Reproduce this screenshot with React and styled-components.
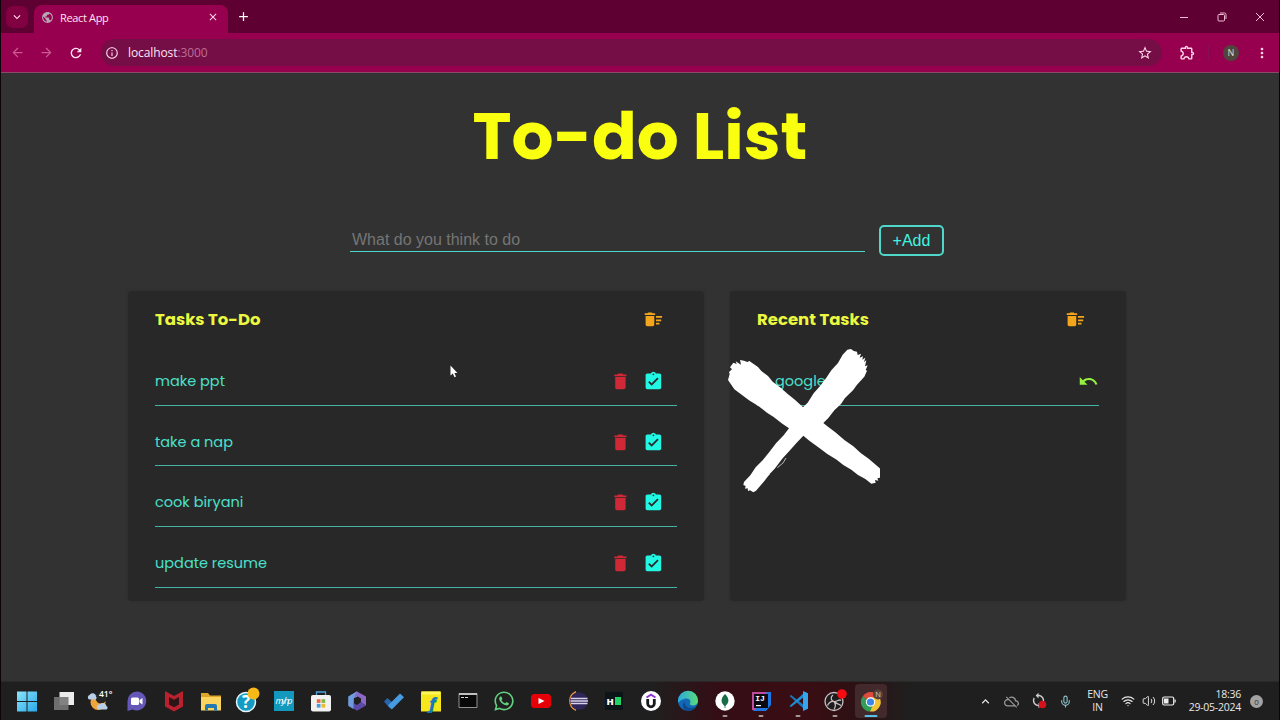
import React from 'react'
import styled, { createGlobalStyle } from 'styled-components'
import {
  MdArrowBack,
  MdArrowForward,
  MdRefresh,
  MdInfoOutline,
  MdStarBorder,
  MdOutlineExtension,
  MdMoreVert,
  MdKeyboardArrowDown,
  MdKeyboardArrowUp,
  MdClose,
  MdAdd,
  MdDelete,
  MdDeleteSweep,
  MdAssignmentTurnedIn,
  MdUndo,
  MdPublic,
  MdCloudOff,
  MdSync,
} from 'react-icons/md'
import { FaWhatsapp } from 'react-icons/fa'
import { Mic, Volume2, Wifi } from 'lucide-react'

const GlobalStyle = createGlobalStyle`
  * {
    box-sizing: border-box;
  }

  body {
    margin: 0;
    background: #323232;
    overflow: hidden;
  }

  svg {
    display: block;
    flex-shrink: 0;
  }
`

const Screen = styled.div`
  width: 1280px;
  height: 720px;
  display: flex;
  flex-direction: column;
  border: solid #0c0508;
  border-width: 0 1px;
  font-family: 'Open Sans', 'Noto Sans', sans-serif;
`

/* ---------- browser ---------- */

const TabStrip = styled.div`
  height: 33px;
  display: flex;
  align-items: center;
  padding-left: 5px;
  background: #5e0031;
  color: #ffd9ea;
`

const TabSearch = styled.div`
  width: 22px;
  height: 22px;
  display: grid;
  place-items: center;
  border-radius: 7px;
  background: #800042;
`

const Tab = styled.div`
  width: 194px;
  height: 28px;
  align-self: flex-end;
  display: flex;
  align-items: center;
  margin-left: 6px;
  padding: 0 9px 4px 7px;
  border-radius: 8px 8px 0 0;
  background: #96004e;
`

const TabTitle = styled.span`
  flex: 1;
  margin-left: 6px;
  font-size: 11px;
  letter-spacing: -0.35px;
  color: #ffe3f0;
`

const NewTab = styled.div`
  margin-left: 8px;
  color: #fff;
`

const WindowControls = styled.div`
  margin-left: auto;
  display: flex;
  width: 114px;
  justify-content: space-around;
`

const Toolbar = styled.div`
  height: 40px;
  display: flex;
  align-items: center;
  padding: 0 9px;
  background: #96004e;
  border-bottom: 1px solid #8a4a68;
  color: #ffd3e8;
`

const NavButtons = styled.div`
  display: flex;
  gap: 14px;
`

const NavIcon = styled.span`
  color: ${({ $dim }) => ($dim ? '#c9598f' : '#ffe3f0')};
`

const AddressBar = styled.div`
  flex: 1;
  height: 27px;
  display: flex;
  align-items: center;
  margin: 0 17px;
  padding: 0 9px 0 4px;
  border-radius: 14px;
  background: #750d46;
`

const Url = styled.span`
  flex: 1;
  margin-left: 9px;
  font-size: 12px;
  letter-spacing: -0.1px;
  color: #ffe3f0;

  em {
    font-style: normal;
    color: #bd6d94;
  }
`

const Divider = styled.span`
  width: 1px;
  height: 16px;
  margin: 0 14px 0 12px;
  background: #850f50;
`

const Avatar = styled.div`
  width: 16px;
  height: 16px;
  display: grid;
  place-items: center;
  margin-right: 15px;
  border-radius: 50%;
  background: #50443c;
  font-size: 9px;
  line-height: 1;
  color: #e5dcc8;
`

/* ---------- page ---------- */

const Page = styled.main`
  height: 608px;
  padding: 0 153px 0 127px;
  background: #323232;
  font-family: Poppins, Inter, sans-serif;
  font-feature-settings: 'cv11';
`

const Title = styled.h1`
  margin: 0 -26px 0 0;
  padding-top: 16px;
  height: 152px;
  text-align: center;
  font-size: 66px;
  line-height: 94px;
  font-weight: 700;
  letter-spacing: 0;
  color: #faff0f;
`

const AddForm = styled.form`
  display: flex;
  align-items: center;
  gap: 14px;
  padding-left: 222px;
  height: 31px;
`

const TaskInput = styled.input`
  width: 515px;
  height: 23px;
  margin-top: 0;
  padding: 1px 2px;
  border: 0;
  border-bottom: 2px solid #4ad8cb;
  border-bottom-width: 1.5px;
  outline: 0;
  background: transparent;
  font-family: 'Liberation Sans', sans-serif;
  font-size: 16px;

  &::placeholder {
    color: #757575;
  }
`

const AddButton = styled.button`
  width: 65px;
  height: 31px;
  padding: 0;
  border: 2px solid #4fd8ca;
  border-radius: 5px;
  background: transparent;
  font-family: 'Liberation Sans', sans-serif;
  font-size: 16px;
  color: #40f5e0;
`

const Columns = styled.div`
  display: flex;
  gap: 26px;
  margin-top: 35px;
`

const Card = styled.section`
  width: ${({ $width }) => $width}px;
  height: 310px;
  padding: 0 27px;
  border-radius: 4px;
  background: #282828;
  box-shadow: 0 0 3px rgba(40, 40, 40, 0.6);
`

const CardHeader = styled.header`
  height: 54px;
  display: flex;
  align-items: center;
  justify-content: space-between;
  padding: 3px 13px 0 0;
  color: #f3a51c;
`

const CardTitle = styled.h2`
  margin: 0;
  font-size: 16.5px;
  font-weight: 700;
  color: #ecf83f;
`

const TaskRow = styled.div`
  height: 60.7px;
  display: flex;
  align-items: center;
  padding: 13px ${({ $inset }) => $inset}px 0 0;
  border-bottom: 1px solid #46b3a4;
`

const TaskName = styled.span`
  flex: 1;
  padding-left: ${({ $indent }) => $indent || 0}px;
  font-size: 14.5px;
  color: #4be0cb;
`

const TaskIcon = styled.span`
  margin-left: 12.5px;
  color: ${({ $color }) => $color};
`

const Cross = styled.svg`
  position: absolute;
  left: 728px;
  top: 349px;
  width: 152px;
  height: 145px;
`

const Cursor = styled.svg`
  position: absolute;
  left: 450px;
  top: 365px;
`

/* ---------- taskbar ---------- */

const Taskbar = styled.footer`
  height: 39px;
  display: flex;
  align-items: stretch;
  padding: 0 7px 0 7.6px;
  background: linear-gradient(90deg, #1f1f1f 650px, #350d14 720px, #3a0d14 800px, #2e1013 850px, #1f1f1f 910px);
  border-top: 1px solid #292929;
`

const AppSlot = styled.div`
  position: relative;
  width: 36.72px;
  display: grid;
  place-items: center;

  &::after {
    content: '';
    position: absolute;
    bottom: 3px;
    left: 50%;
    width: ${({ $state }) => ($state === 'active' ? 13 : 5)}px;
    height: 2px;
    transform: translateX(-50%);
    border-radius: 2px;
    background: ${({ $state }) => ($state === 'active' ? '#57bfe8' : $state === 'open' ? '#a39799' : 'transparent')};
  }
`

const ActiveTile = styled.div`
  width: 32px;
  height: 34px;
  display: grid;
  place-items: center;
  border-radius: 4px;
  background: #42292b;
`

const Tray = styled.div`
  margin-left: auto;
  display: flex;
  align-items: center;
  color: #e8e8e8;
`

const TrayCell = styled.div`
  width: ${({ $width }) => $width}px;
  display: flex;
  justify-content: ${({ $align }) => $align || 'center'};
  text-align: ${({ $align }) => ($align ? 'right' : 'center')};
  font-size: 10.5px;
  line-height: 13px;
  letter-spacing: -0.25px;
  white-space: nowrap;
`

const Badge = styled.span`
  width: 13px;
  height: 13px;
  border-radius: 50%;
  background: #a3a3a3;
  font-size: 8px;
  color: #333;
  text-align: center;
`

const Icon = ({ children }) => (
  <svg width="24" height="24" viewBox="0 0 24 24">
    {children}
  </svg>
)

const apps = [
  {
    name: 'start',
    icon: (
      <Icon>
        <defs>
          <linearGradient id="win" x1="0" y1="0" x2="1" y2="1">
            <stop offset="0" stopColor="#8be4fb" />
            <stop offset="1" stopColor="#29a8e8" />
          </linearGradient>
        </defs>
        <path fill="url(#win)" d="M2 2.5h9.5V12H2zM12.5 2.5H22V12h-9.5zM2 13h9.500v9.500H2zM12.500 13H22v9.500h-9.500z" />
      </Icon>
    ),
  },
  {
    name: 'task view',
    icon: (
      <Icon>
        <path fill="#ececec" d="M7.500 3H22v13H7.500z" />
        <path fill="#777" fillOpacity=".9" d="M2 8h14.500v13H2z" />
      </Icon>
    ),
  },
  {
    name: 'weather',
    icon: (
      <svg width="26" height="24" viewBox="0 0 26 24">
        <circle cx="11" cy="13.500" r="7.500" fill="#f0a43c" />
        <circle cx="14" cy="9" r="5.500" fill="#252525" />
        <path fill="#b9cfe5" d="M2 10.500a2.500 2.500 0 0 1 .5-4.500 3.500 3.500 0 0 1 6.500 1.500 2 2 0 0 1-.5 3zM12 20.500a2.500 2.500 0 0 1 .5-5 4 4 0 0 1 7 1.500 2 2 0 0 1 0 3.500z" />
        <text x="12" y="8" fontSize="8.500" fontWeight="600" fill="#fff">41°</text>
      </svg>
    ),
  },
  {
    name: 'chat',
    icon: (
      <Icon>
        <path fill="#6457b8" d="M12 2.500a9.500 9.500 0 1 1-4.500 18L2.500 22v-9.500A9.500 9.500 0 0 1 12 2.500z" />
        <rect x="6" y="8.500" width="8" height="7.500" rx="1.500" fill="#fff" />
        <path fill="#fff" d="M14.500 11l3-2v6.500l-3-2z" />
      </Icon>
    ),
  },
  {
    name: 'mcafee',
    icon: (
      <Icon>
        <path fill="#b9212f" d="M3 2l9 5 9-5v15.500L12 22.500l-9-5z" />
        <path fill="#2b1517" d="M7 8l5 2.800L17 8v7.500l-5 2.800-5-2.800z" />
      </Icon>
    ),
  },
  {
    name: 'explorer',
    icon: (
      <Icon>
        <path fill="#e0a526" d="M2 4h7l2 2.500h11V21H2z" />
        <path fill="#fbd460" d="M2 8h20v13.500H2z" />
        <path fill="#2479b3" d="M6 21.500V17a2 2 0 0 1 2-2h8a2 2 0 0 1 2 2v4.500h-3V19H9v2.500z" />
      </Icon>
    ),
  },
  {
    name: 'support',
    icon: (
      <svg width="26" height="28" viewBox="0 0 26 28">
        <circle cx="12" cy="15" r="9.500" fill="#139bc4" stroke="#e6f5fa" strokeWidth="1.500" />
        <text x="12" y="21" textAnchor="middle" fontSize="17" fontWeight="700" fill="#fff">?</text>
        <circle cx="19.500" cy="6.500" r="6" fill="#f7b918" />
      </svg>
    ),
  },
  {
    name: 'myhp',
    icon: (
      <Icon>
        <path fill="#1299bd" d="M2 2h20v20H2z" />
        <text x="12" y="15" textAnchor="middle" fontSize="9" fontStyle="italic" fill="#fff" textLength="17">myhp</text>
      </Icon>
    ),
  },
  {
    name: 'store',
    icon: (
      <Icon>
        <path fill="none" stroke="#4aa2dc" strokeWidth="1.300" d="M7.500 6.500V3h9v3.500" />
        <rect x="2" y="6" width="20" height="16.500" rx="2" fill="#f2f2f2" />
        <path fill="#ef6940" d="M7.800 10.200h3.700v3.700H7.800z" />
        <path fill="#83b744" d="M12.500 10.200h3.700v3.700h-3.700z" />
        <path fill="#4a9bd9" d="M7.800 14.900h3.700v3.700H7.800z" />
        <path fill="#f1b72f" d="M12.500 14.900h3.700v3.700h-3.700z" />
      </Icon>
    ),
  },
  {
    name: 'office',
    icon: (
      <Icon>
        <path fill="#84b6e4" d="M12 2.500L3.500 7.500v9.500l5 3V9.500L15 6z" />
        <path fill="#8a68ca" d="M12 2.500l9 5v9l-5-3V9.500L12 7 8.500 9.500 6 6z" />
        <path fill="#5b4aa8" d="M3.500 16.500L12 21.800l9-5.300-5-3.500-4 3-4.500-2.500z" />
        <path fill="#6d9be0" d="M3.500 7.500v9l5 3V9.500l3.500-7z" />
      </Icon>
    ),
  },
  {
    name: 'todo',
    icon: (
      <Icon>
        <path fill="#2665ae" d="M2 12.500l3.500-3.500 6 5.500-3.500 5z" />
        <path fill="#479be3" d="M18 4.500l4 3.800L9.800 20.500 6 16.500z" />
      </Icon>
    ),
  },
  {
    name: 'flipkart',
    icon: (
      <Icon>
        <path fill="#f5e71a" d="M2 2.500h20v20H2z" />
        <path fill="#fff65a" d="M3 2.500h18v3H3z" />
        <text x="13.500" y="21" textAnchor="middle" fontSize="17" fontWeight="800" fontStyle="italic" fill="#1679bb">f</text>
      </Icon>
    ),
  },
  {
    name: 'terminal',
    icon: (
      <Icon>
        <path fill="#090909" stroke="#929292" d="M3 4.500h18v14H3z" />
        <path fill="#c0c0c0" d="M3 4h18v2H3z" />
        <path stroke="#d7d7d7" d="M5 8.500h3M9 8.500h3" />
      </Icon>
    ),
  },
  { name: 'whatsapp', icon: <FaWhatsapp size={22} color="#63cf80" /> },
  {
    name: 'youtube',
    icon: (
      <Icon>
        <rect x="2" y="5" width="20" height="14" rx="3.500" fill="#e70008" />
        <path fill="#fff" d="M9.500 9l6 3-6 3z" />
      </Icon>
    ),
  },
  {
    name: 'eclipse',
    icon: (
      <Icon>
        <path fill="none" stroke="#e29148" strokeWidth="1.500" d="M10 2.800a10 10 0 0 0 0 18.400" />
        <circle cx="13" cy="12" r="8.800" fill="#2e2559" />
        <path stroke="#d9d4e9" strokeWidth="1.600" d="M5 9.500h16.500M4.500 12H22M5 14.500h16.500" />
      </Icon>
    ),
  },
  {
    name: 'hackerrank',
    icon: (
      <Icon>
        <path fill="#0c1518" d="M3 3h18v18H3z" />
        <text x="4.500" y="15.700" fontSize="9.500" fontWeight="800" fill="#fff">H</text>
        <path fill="#20d565" d="M13 8h6v8h-6z" />
      </Icon>
    ),
  },
  {
    name: 'udemy',
    icon: (
      <Icon>
        <circle cx="12" cy="12" r="10" fill="#fff" />
        <path fill="none" stroke="#9135d5" strokeWidth="2" d="M7.500 8.500L12 5.700l4.500 2.800" />
        <path fill="none" stroke="#17171c" strokeWidth="2.800" d="M8.700 10v4.500a3.300 3.300 0 0 0 6.600 0V10" />
      </Icon>
    ),
  },
  {
    name: 'edge',
    icon: (
      <Icon>
        <defs>
          <linearGradient id="edge" x1="0" y1="0" x2="1" y2="0">
            <stop offset="0" stopColor="#28a9df" />
            <stop offset="1" stopColor="#5adb79" />
          </linearGradient>
        </defs>
        <circle cx="12" cy="12" r="10" fill="#1267b6" />
        <path fill="url(#edge)" d="M2 11.500A10 10 0 0 1 22 12c0 3-2.500 4.500-5 4.500s-4-1-3-2.500 0-4.500-3.500-4.500S3.500 12 2 14z" />
        <path fill="#0d4b8c" d="M9 12.500c-1 4 3 7 7 6.500 2 0 3.500-1 4-1.500-2.500 5-8 5-10 4-4-2-4-7-1-9z" />
      </Icon>
    ),
  },
  {
    name: 'mongodb',
    state: 'open',
    icon: (
      <Icon>
        <circle cx="12" cy="12" r="9.700" fill="#fff" />
        <path fill="#176d48" d="M12 5c5 5 4 9 .4 12v2h-.8v-2C8 14 7 10 12 5z" />
      </Icon>
    ),
  },
  {
    name: 'intellij',
    state: 'open',
    icon: (
      <Icon>
        <path fill="#1d77e3" d="M12 3h10v13l-5 6H4z" />
        <path fill="#bf4d9f" d="M3 3h15L6 21H3z" />
        <path fill="#09090f" d="M5 5h14v14H5z" />
        <text x="6.200" y="12" fontFamily="Liberation Mono" fontSize="8" fontWeight="700" fill="#fff">IJ</text>
        <path fill="#fff" d="M7 16h5v1.200H7z" />
      </Icon>
    ),
  },
  {
    name: 'vscode',
    state: 'open',
    icon: (
      <Icon>
        <path fill="#1679bd" d="M3.500 7l1.500-1 13 10v4z" />
        <path fill="#1c8fd5" d="M3.500 17L5 18 18 8V4z" />
        <path fill="#35a7ea" d="M17 2l5 2.300v15.400L17 22z" />
      </Icon>
    ),
  },
  {
    name: 'obs',
    state: 'open',
    icon: (
      <svg width="26" height="26" viewBox="0 0 26 26">
        <circle cx="12" cy="13.500" r="9" fill="#201b1c" stroke="#c6c0c0" strokeWidth="1.300" />
        <path fill="none" stroke="#c6c0c0" strokeWidth="1.300" d="M11 7c-3 2-2 6 1 6.500 3.500.5 5-3 7-1M12 13.500c-3-.5-5 1-6.500 4M12 13.500c1.500 2 2 5 0 8M12 13.500c2 2.500 5 2 7 4" />
        <circle cx="20" cy="6" r="4.800" fill="#f50b12" />
      </svg>
    ),
  },
  {
    name: 'chrome',
    state: 'active',
    icon: (
      <ActiveTile>
        <svg width="26" height="26" viewBox="0 0 26 26">
          <path fill="#df4b3c" d="M12.500 14L4.700 8.500A9.500 9.500 0 0 1 21.500 9.500z" />
          <path fill="#f3c332" d="M12.500 14V9.500h9A9.500 9.500 0 0 1 12 23.500z" />
          <path fill="#329d54" d="M12.500 14l3 2-3.500 7.500A9.500 9.500 0 0 1 4.700 8.500z" />
          <circle cx="12.500" cy="14" r="4.700" fill="#fff" />
          <circle cx="12.500" cy="14" r="3.600" fill="#3b86e6" />
          <circle cx="20" cy="6.500" r="5" fill="#574239" />
          <text x="20" y="9.300" textAnchor="middle" fontSize="7.500" fill="#d9cfc0">N</text>
        </svg>
      </ActiveTile>
    ),
  },
]

const tasks = ['make ppt', 'take a nap', 'cook biryani', 'update resume']

const Browser = () => (
  <>
    <TabStrip>
      <TabSearch>
        <MdKeyboardArrowDown size={14} />
      </TabSearch>
      <Tab>
        <MdPublic size={13} color="#b9a3b4" />
        <TabTitle>React App</TabTitle>
        <MdClose size={12} />
      </Tab>
      <NewTab>
        <MdAdd size={15} />
      </NewTab>
      <WindowControls>
        <svg width="10" height="10" viewBox="0 0 10 10" stroke="#f2bcd5">
          <path d="M1 5.500h8" />
        </svg>
        <svg width="10" height="10" viewBox="0 0 10 10" fill="none" stroke="#f2bcd5">
          <rect x="1" y="2.500" width="6.500" height="6.500" rx="1" />
          <path d="M3 1h4.500Q9 1 9 2.500V7" />
        </svg>
        <svg width="10" height="10" viewBox="0 0 10 10" stroke="#f2bcd5">
          <path d="M1 1l8 8M9 1L1 9" />
        </svg>
      </WindowControls>
    </TabStrip>
    <Toolbar>
      <NavButtons>
        <NavIcon $dim><MdArrowBack size={15} /></NavIcon>
        <NavIcon $dim><MdArrowForward size={15} /></NavIcon>
        <NavIcon><MdRefresh size={16} /></NavIcon>
      </NavButtons>
      <AddressBar>
        <MdInfoOutline size={14} />
        <Url>localhost<em>:3000</em></Url>
        <MdStarBorder size={16} />
      </AddressBar>
      <MdOutlineExtension size={17} />
      <Divider />
      <Avatar>N</Avatar>
      <MdMoreVert size={16} />
    </Toolbar>
  </>
)

const BrushCross = () => (
  <Cross viewBox="24 207 456 435" fill="#fff">
    <path d="M24 300l5-18-2-6 9-8-6-6 10-14 10 4-3-8 16 10-3-14 12 2 10 4 6-3 14 10 12 8 10 12 20 15 14 17 24 18 22 20 18 14 24 22 3 3 14-14 18-28 20-23 17-22 16-24 20-22 14-25 14-15 11-2 8 6 10 2 2 10 10-4-4 12 10-4-2 10 9-6-4 13 7-5-4 18 8-3-6 14 4 2-8 18-22 24-12 17-24 23-12 18-20 19-18 23-15 15 14 11 22 17 28 24 26 18 22 20 24 17 22 19 17 15 3 9-8 7 4 6-12 3 3 7-10-2 2 8-13 3-18-14-22-12-20-16-24-14-20-16-28-17-24-18-30-22-18-15-20 21-22 25-20 22-24 31-18 19-16 22-22 25-8 5-10-6-6 2-1-8-8 1 2-8-7-3 2-9 19-20 16-24 21-21 20-25 20-26 23-24 16-21-20-14-26-20-20-13-26-20-28-17-22-17-22-16z" />
    <path fill="none" stroke="#fff" strokeWidth="2" d="M352 476l13 10 17 13M413 526l24 20 34 27M198 534l-9 15-17 14M149 582l-18 21-24 21" />
  </Cross>
)

const App = () => (
  <Screen>
    <GlobalStyle />
    <Browser />

    <Page>
      <Title>To-do List</Title>
      <AddForm>
        <TaskInput placeholder="What do you think to do" />
        <AddButton type="button">+Add</AddButton>
      </AddForm>

      <Columns>
        <Card $width={576}>
          <CardHeader>
            <CardTitle>Tasks To-Do</CardTitle>
            <MdDeleteSweep size={20.8} />
          </CardHeader>
          {tasks.map((task) => (
            <TaskRow key={task} $inset={13}>
              <TaskName>{task}</TaskName>
              <TaskIcon $color="#cf2836"><MdDelete size={20.8} /></TaskIcon>
              <TaskIcon $color="#22f7e4"><MdAssignmentTurnedIn size={20.8} /></TaskIcon>
            </TaskRow>
          ))}
        </Card>

        <Card $width={396}>
          <CardHeader>
            <CardTitle>Recent Tasks</CardTitle>
            <MdDeleteSweep size={20.8} />
          </CardHeader>
          <TaskRow $inset={0}>
            <TaskName $indent={18}>google</TaskName>
            <TaskIcon $color="#96f03f"><MdUndo size={20.8} /></TaskIcon>
          </TaskRow>
        </Card>
      </Columns>
    </Page>

    <Taskbar>
      {apps.map((app) => (
        <AppSlot key={app.name} $state={app.state}>
          {app.icon}
        </AppSlot>
      ))}
      <Tray>
        <TrayCell $width={26}><MdKeyboardArrowUp size={15} /></TrayCell>
        <TrayCell $width={27}><MdCloudOff size={15} color="#999" /></TrayCell>
        <TrayCell $width={27}>
          <svg width="18" height="18" viewBox="0 0 18 18">
            <MdSync size={17} color="#cfcfcf" />
            <circle cx="12.500" cy="12.500" r="3.800" fill="#d8101c" />
          </svg>
        </TrayCell>
        <TrayCell $width={27}><Mic size={13} color="#8fc6cf" /></TrayCell>
        <TrayCell $width={37}>ENG<br />IN</TrayCell>
        <TrayCell $width={23}><Wifi size={14} /></TrayCell>
        <TrayCell $width={19}><Volume2 size={14} strokeWidth={1.6} /></TrayCell>
        <TrayCell $width={22}>
          <svg width="14" height="10" viewBox="0 0 14 10">
            <rect x=".7" y="1" width="11" height="8" rx="1.500" fill="none" stroke="#eee" strokeWidth="1.200" />
            <path fill="#eee" d="M2 2.500h4.500v5H2zM12.500 3.500h1.200v3h-1.200z" />
          </svg>
        </TrayCell>
        <TrayCell $width={61} $align="flex-end">18:36<br />29-05-2024</TrayCell>
        <TrayCell $width={31}><Badge>0</Badge></TrayCell>
      </Tray>
    </Taskbar>

    <BrushCross />
    <Cursor width="8" height="13" viewBox="0 0 8 13">
      <path fill="#fff" d="M.5.5v10l2.300-2 1.700 3.700 1.500-.7-1.600-3.500h3z" />
    </Cursor>
  </Screen>
)

export default App
